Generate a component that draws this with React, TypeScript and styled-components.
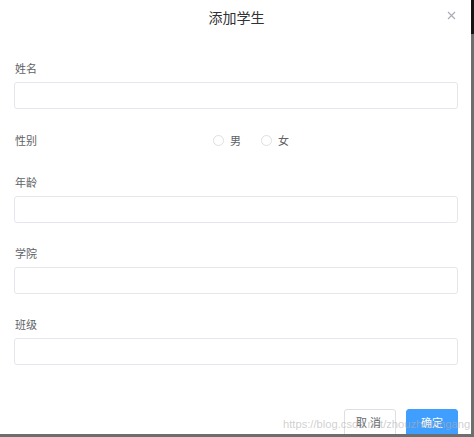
import React from "react";
import styled, { createGlobalStyle } from "styled-components";

const Global = createGlobalStyle`
  html, body { margin: 0; padding: 0; }
  body {
    width: 474px;
    height: 437px;
    overflow: hidden;
    background: linear-gradient(to bottom, #141414 0, #141414 34px, #6e6e6e 34px, #6e6e6e 100%);
    font-family: "Noto Sans CJK SC", "Noto Sans", sans-serif;
  }
`;

const Dialog = styled.div`
  position: relative;
  width: 471px;
  height: 434px;
  background: #ffffff;
  overflow: hidden;
  box-sizing: border-box;
`;

const Header = styled.div`
  position: relative;
  height: 34px;
  display: flex;
  align-items: center;
  justify-content: center;
`;

const Title = styled.span`
  font-size: 14px;
  line-height: 20px;
  color: #303133;
  margin-left: 2px;
`;

const Close = styled.button`
  position: absolute;
  right: 14px;
  top: 9px;
  width: 12px;
  height: 12px;
  padding: 0;
  border: none;
  background: transparent;
  display: flex;
  align-items: center;
  justify-content: center;
`;

const Body = styled.div`
  padding: 24px 13px 0 14px;
  display: flex;
  flex-direction: column;
`;

const Item = styled.div<{ $gap?: number }>`
  display: flex;
  flex-direction: column;
  margin-bottom: ${(p) => p.$gap ?? 20}px;
`;

const InlineItem = styled.div<{ $gap?: number }>`
  display: flex;
  align-items: center;
  height: 22px;
  margin-bottom: ${(p) => p.$gap ?? 21}px;
`;

const Label = styled.label<{ $width?: number }>`
  font-size: 11px;
  line-height: 20px;
  height: 20px;
  color: #606266;
  margin-left: 1px;
  ${(p) => (p.$width ? `width: ${p.$width}px;` : "margin-bottom: 4px;")}
`;

const Input = styled.input`
  box-sizing: border-box;
  width: 100%;
  height: 27px;
  border: 1px solid #e4e6eb;
  border-radius: 3px;
  background: #fff;
  outline: none;
  font: inherit;
`;

const RadioGroup = styled.div`
  display: flex;
  align-items: center;
  gap: 20px;
`;

const RadioOption = styled.span`
  display: flex;
  align-items: center;
  gap: 6px;
  font-size: 11px;
  color: #606266;
`;

const RadioCircle = styled.span`
  width: 9px;
  height: 9px;
  border: 1px solid #dcdfe6;
  border-radius: 50%;
  background: #fff;
`;

const Footer = styled.div`
  display: flex;
  justify-content: flex-end;
  gap: 10px;
  padding: 44px 13px 0 0;
`;

const Button = styled.button<{ $primary?: boolean }>`
  width: 52px;
  height: 28px;
  box-sizing: border-box;
  border-radius: 3px;
  border: 1px solid ${(p) => (p.$primary ? "#409eff" : "#dcdfe6")};
  background: ${(p) => (p.$primary ? "#409eff" : "#ffffff")};
  color: ${(p) => (p.$primary ? "#ffffff" : "#606266")};
  font-family: "Noto Sans CJK SC", sans-serif;
  font-size: 11px;
  letter-spacing: ${(p) => (p.$primary ? "0" : "3px")};
  padding: 0;
  padding-bottom: 2px;
`;

const Watermark = styled.div`
  position: absolute;
  left: 283px;
  top: 416px;
  font-family: "Liberation Sans", Arial, sans-serif;
  font-size: 11.2px;
  line-height: 16px;
  color: rgba(175, 175, 175, 0.6);
  white-space: nowrap;
  pointer-events: none;
`;

export default function App() {
  return (
    <>
      <Global />
      <Dialog>
        <Header>
          <Title>添加学生</Title>
          <Close aria-label="关闭">
            <svg width="9" height="9" viewBox="0 0 9 9">
              <path d="M1 1 L8 8 M8 1 L1 8" stroke="#a8abb2" strokeWidth="1.1" />
            </svg>
          </Close>
        </Header>
        <Body>
          <Item>
            <Label>姓名</Label>
            <Input />
          </Item>
          <InlineItem>
            <Label $width={198}>性别</Label>
            <RadioGroup>
              <RadioOption>
                <RadioCircle />男
              </RadioOption>
              <RadioOption>
                <RadioCircle />女
              </RadioOption>
            </RadioGroup>
          </InlineItem>
          <Item>
            <Label>年龄</Label>
            <Input />
          </Item>
          <Item>
            <Label>学院</Label>
            <Input />
          </Item>
          <Item $gap={0}>
            <Label>班级</Label>
            <Input />
          </Item>
        </Body>
        <Footer>
          <Button>取消</Button>
          <Button $primary>确定</Button>
        </Footer>
        <Watermark>https://blog.csdn.net/zhouzhiwengang</Watermark>
      </Dialog>
    </>
  );
}
